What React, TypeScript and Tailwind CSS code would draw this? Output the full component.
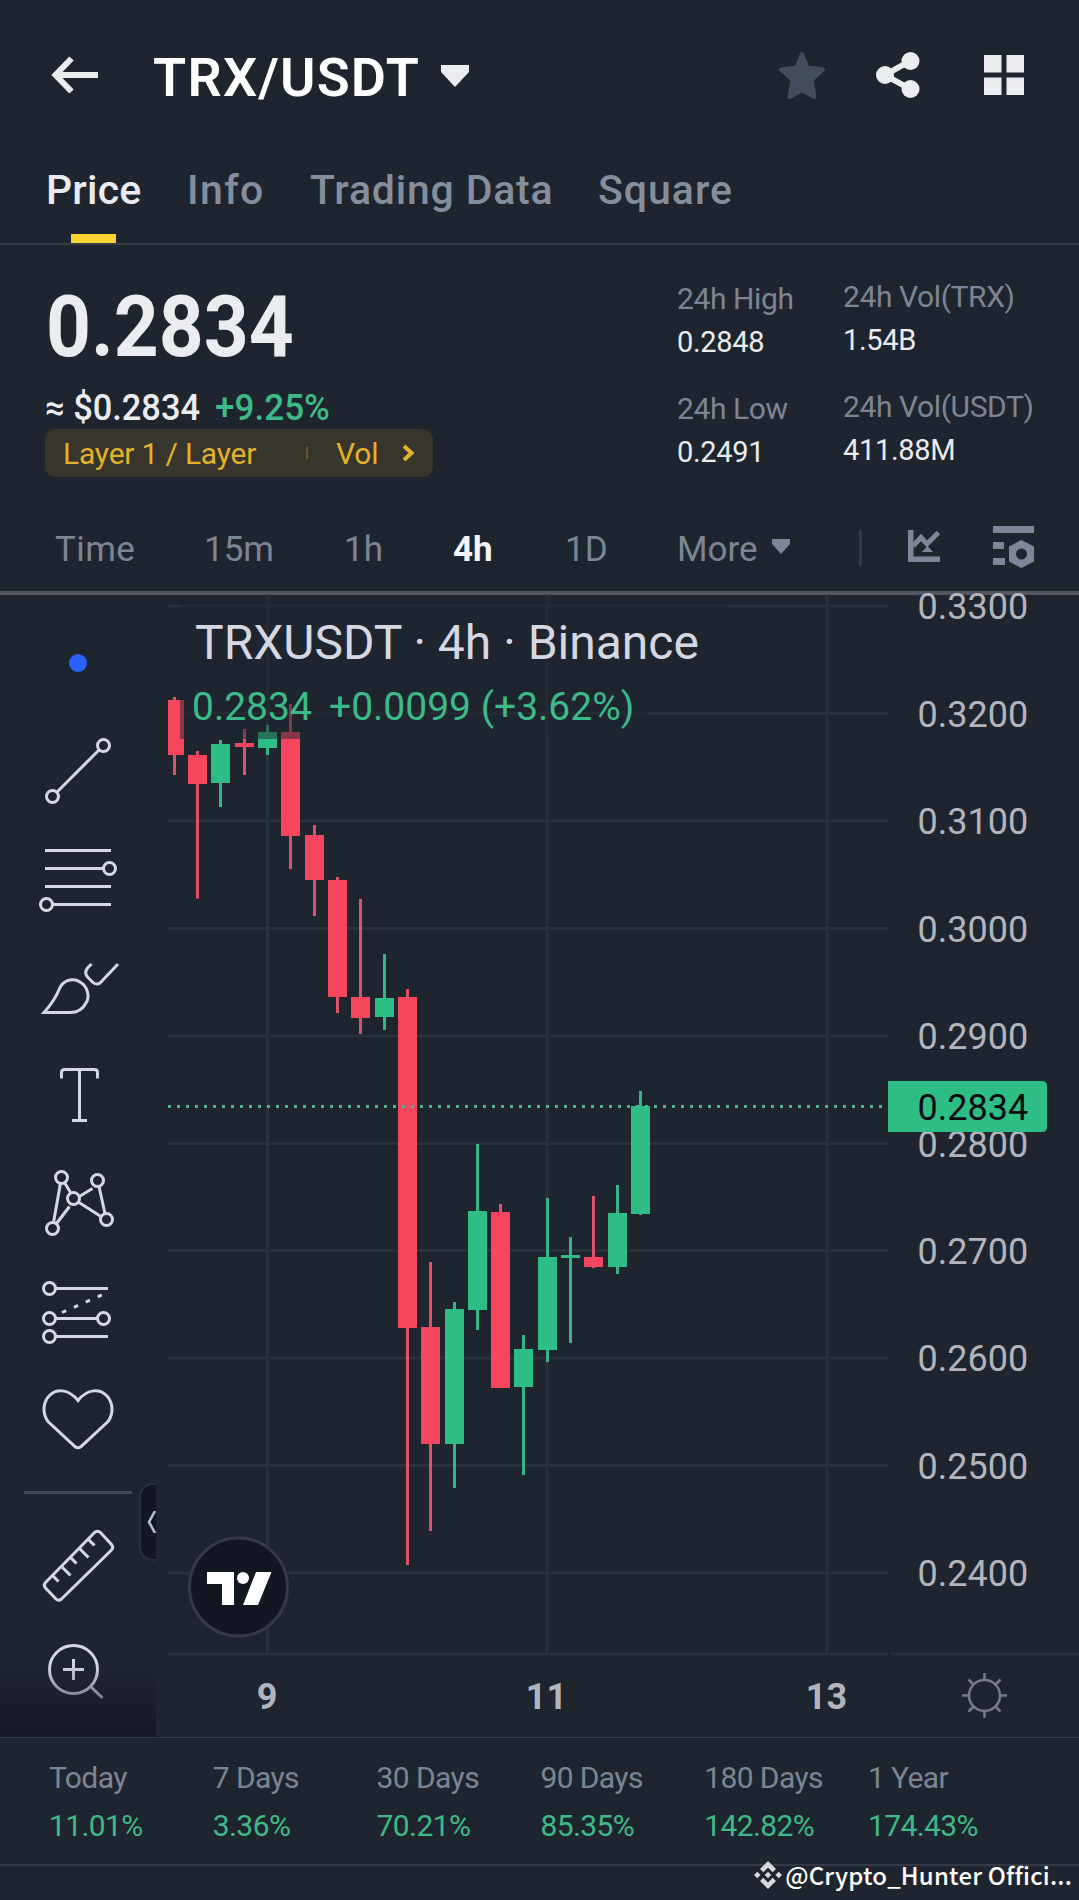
import { clsx } from "clsx";
import type { ReactNode } from "react";

type Candle = { x: number; top: number; bottom: number; high: number; low: number; up?: boolean };

const tabs = [
  { label: "Price", className: "w-[141px] tracking-[0.2px]", active: true },
  { label: "Info", className: "w-[123px] tracking-[1.4px]" },
  { label: "Trading Data", className: "w-[288px] tracking-[0.8px]" },
  { label: "Square", className: "tracking-[1px]" },
];

const intervals = [
  { label: "Time", className: "w-[149px] tracking-[0.4px]" },
  { label: "15m", className: "w-[140px]" },
  { label: "1h", className: "w-[109px]" },
  { label: "4h", className: "w-[112px]", active: true },
  { label: "1D", className: "w-[112px]" },
];

const performance = [
  { label: "Today", value: "11.01%" },
  { label: "7 Days", value: "3.36%" },
  { label: "30 Days", value: "70.21%" },
  { label: "90 Days", value: "85.35%" },
  { label: "180 Days", value: "142.82%" },
  { label: "1 Year", value: "174.43%" },
];

const priceLevels = [
  { label: "0.3300", y: 606 },
  { label: "0.3200", y: 713.5 },
  { label: "0.3100", y: 821 },
  { label: "0.3000", y: 928.5 },
  { label: "0.2900", y: 1036 },
  { label: "0.2800", y: 1143.5 },
  { label: "0.2700", y: 1250.5 },
  { label: "0.2600", y: 1358 },
  { label: "0.2500", y: 1465.5 },
  { label: "0.2400", y: 1573 },
];

const dates = [
  { label: "9", x: 267.5 },
  { label: "11", x: 547 },
  { label: "13", x: 827 },
];

const candles: Candle[] = [
  { x: 165, top: 700, bottom: 755, high: 697, low: 775 },
  { x: 188, top: 755, bottom: 784, high: 751, low: 898.5 },
  { x: 211, top: 744, bottom: 783, high: 740, low: 807, up: true },
  { x: 235, top: 743, bottom: 747, high: 729, low: 775 },
  { x: 258, top: 732, bottom: 748, high: 725, low: 755, up: true },
  { x: 281, top: 732, bottom: 836, high: 704, low: 869 },
  { x: 305, top: 835, bottom: 880, high: 825, low: 916 },
  { x: 328, top: 880, bottom: 997, high: 877, low: 1013 },
  { x: 351, top: 997, bottom: 1018, high: 899, low: 1034 },
  { x: 375, top: 998, bottom: 1017, high: 954, low: 1030, up: true },
  { x: 398, top: 997, bottom: 1328, high: 989, low: 1565 },
  { x: 421, top: 1327, bottom: 1444, high: 1262, low: 1531 },
  { x: 445, top: 1309, bottom: 1444, high: 1302, low: 1488, up: true },
  { x: 468, top: 1211, bottom: 1310, high: 1144, low: 1330, up: true },
  { x: 491, top: 1212, bottom: 1388, high: 1204, low: 1388 },
  { x: 514, top: 1349, bottom: 1387, high: 1335, low: 1475, up: true },
  { x: 538, top: 1257, bottom: 1350, high: 1198, low: 1362, up: true },
  { x: 561, top: 1255, bottom: 1258, high: 1237, low: 1343, up: true },
  { x: 584, top: 1257, bottom: 1267, high: 1196, low: 1268 },
  { x: 608, top: 1213, bottom: 1267, high: 1185, low: 1274, up: true },
  { x: 631, top: 1106, bottom: 1214, high: 1091, low: 1215, up: true },
];

function Header() {
  return (
    <header className="flex h-[152px] items-center">
      <svg className="ml-[51px] -mt-0.5 h-12 w-[50px]" viewBox="0 0 50 48" fill="none" stroke="#eaecf0" strokeWidth="6">
        <path d="M20.500 7.500 4.500 24l16 16.500M4.500 24H47" />
      </svg>
      <h1 className="mt-1 ml-[52px] w-[288px] whitespace-nowrap text-[54px] leading-none font-semibold tracking-[1.2px] text-white">
        TRX/USDT
      </h1>
      <svg className="h-[22px] w-7" viewBox="0 0 28 22" fill="#eaecf0">
        <path d="M0 0h28v7L14 22 0 7z" />
      </svg>
      <svg className="-mt-0.5 ml-[308px] h-[50px] w-[50px]" viewBox="0 0 50 50" fill="#444d5d" stroke="#444d5d" strokeWidth="4" strokeLinejoin="round">
        <path d="m25 4 5.500 13.500L46 19.500 34.500 30l3 17L25 40.500 12.500 47l3-17L4 19.500l15.500-2z" />
      </svg>
      <svg className="-mt-0.5 ml-[49px] h-12 w-11" viewBox="0 0 44 48" fill="#eaecf0">
        <path d="M34 10 9 24l25 14" fill="none" stroke="#eaecf0" strokeWidth="6" />
        <circle cx="9" cy="24" r="9" />
        <circle cx="34.500" cy="10" r="9" />
        <circle cx="34.500" cy="38" r="9" />
      </svg>
      <svg className="-mt-0.5 ml-16 h-10 w-10" viewBox="0 0 40 40" fill="#eaecf0">
        <path d="M0 0h17.500v17.500H0zM22.500 0H40v17.500H22.500zM0 22.500h17.500V40H0zM22.500 22.500H40V40H22.500z" />
      </svg>
    </header>
  );
}

function Tabs() {
  return (
    <nav className="flex h-[93px] border-b-2 border-[#353b46] pl-[46px] text-[41px] font-medium">
      {tabs.map((tab) => (
        <div
          key={tab.label}
          className={clsx("whitespace-nowrap leading-[76px]", tab.className, tab.active ? "text-[#eaecf0]" : "text-[#858e9c]")}
        >
          {tab.label}
          {tab.active && <div className="mt-1.5 ml-[25px] h-[9px] w-[45px] bg-[#fcd535]" />}
        </div>
      ))}
    </nav>
  );
}

function Stat({ label, value }: { label: string; value: string }) {
  return (
    <div className="h-[110px] whitespace-nowrap text-[30px] leading-[30px] tracking-[-0.4px]">
      <div className="text-[#7d8594]">{label}</div>
      <div className="mt-[13px] text-[29px] tracking-[-0.3px] text-[#eaecf0]">{value}</div>
    </div>
  );
}

function Summary() {
  return (
    <section className="flex h-[260px] whitespace-nowrap">
      <div className="w-[677px] shrink-0 pt-[41px] pl-[45px]">
        <div className="ml-px origin-left scale-x-[0.912] text-[86px] leading-[81px] font-bold text-[#eaecf0]">0.2834</div>
        <div className="mt-[21px] flex h-[38px] text-[36px] leading-10 font-medium">
          <span className="w-[170px] origin-left scale-x-[0.955] text-[#eaecf0]">≈ $0.2834</span>
          <span className="origin-left scale-x-[0.975] text-[#3dba88]">+9.25%</span>
        </div>
        <div className="mt-[3px] flex h-12 w-[388px] items-center rounded-[10px] bg-[#37352c] pl-[18px] text-[30px] text-[#e3b22b]">
          <span className="w-[243px] tracking-[-0.2px]">Layer 1 / Layer</span>
          <span className="h-3 w-0.5 bg-[#6b5824]" />
          <span className="ml-[28px] w-[66px] tracking-[-0.2px]">Vol</span>
          <svg className="h-[18px] w-[13px]" viewBox="0 0 13 18" fill="none" stroke="#e3b22b" strokeWidth="4">
            <path d="m2 2 7.500 7L2 16" />
          </svg>
        </div>
      </div>
      <div className="w-[166px] shrink-0 pt-[39px]">
        <Stat label="24h High" value="0.2848" />
        <Stat label="24h Low" value="0.2491" />
      </div>
      <div className="pt-[37px]">
        <Stat label="24h Vol(TRX)" value="1.54B" />
        <Stat label="24h Vol(USDT)" value="411.88M" />
      </div>
    </section>
  );
}

function IntervalBar() {
  return (
    <div className="flex h-[90px] items-center border-b-4 border-[#53565f] pl-[55px] text-[35px] text-[#7d8594]">
      {intervals.map((item) => (
        <div key={item.label} className={clsx("mt-[5px]", item.className, item.active && "font-bold text-[#f3f4f7]")}>
          {item.label}
        </div>
      ))}
      <div className="mt-[5px] w-[95px]">More</div>
      <svg className="-mt-1 h-[15px] w-[18px]" viewBox="0 0 18 15" fill="#7d8799">
        <path d="M0 0h18v5L9 15 0 5z" />
      </svg>
      <div className="ml-[69px] h-9 w-[3px] bg-[#343a46]" />
      <svg className="-mt-1 ml-[46px] h-8 w-8" viewBox="0 0 32 32" fill="none" stroke="#7d8799" strokeWidth="5">
        <path d="M2.500 0v29.500H32" strokeWidth="6" />
        <path d="m5 16 8-8.500 6 6.500L30.500 2.500" />
        <path d="m19.500 16 5.500 6H14z" fill="#7d8799" stroke="none" />
      </svg>
      <svg className="-mt-0.5 ml-[53px] h-[42px] w-[42px]" viewBox="0 0 42 42" fill="#7d8799">
        <path d="M0 0h41v7H0zM0 16h11v7H0zM0 32h12v7H0z" />
        <path fillRule="evenodd" d="M28.500 14 41 20.500v15L28.500 42 16 35.500v-15zM28.500 22.500a5.500 5.500 0 1 0 0 11 5.500 5.500 0 0 0 0-11z" />
      </svg>
    </div>
  );
}

function Tool({ children }: { children: ReactNode }) {
  return (
    <svg className="block h-[108px] w-[156px]" viewBox="0 0 156 108" fill="none" stroke="#d5d8e2" strokeWidth="3">
      {children}
    </svg>
  );
}

function DrawingToolbar() {
  return (
    <aside className="relative w-[156px] shrink-0 pt-3.5">
      <Tool>
        <circle cx="78" cy="54" r="9" fill="#2962ff" stroke="none" />
      </Tool>
      <Tool>
        <circle cx="103.500" cy="28.500" r="6" />
        <circle cx="52.500" cy="79.500" r="6" />
        <path d="M99 33 57 75" />
      </Tool>
      <Tool>
        <path d="M45 25.500h66M45 43.500h58M45 61.500h66M53 79.500h58" />
        <circle cx="109.500" cy="43.500" r="6" />
        <circle cx="46.500" cy="79.500" r="6" />
      </Tool>
      <Tool>
        <path d="M44 79.500C54 68.500 57 62 60 54.500 65 45.500 75 45.500 80 49c8 4.500 10 15 6 21-3 6-8.500 9.500-16 9.500z" />
        <path d="m91.500 31-4 4c-3 4-1.500 7.500.5 9.500l4.500 4.500c3 3 6.500 2.500 9-.5L118 31" />
      </Tool>
      <Tool>
        <path d="M61.500 37.500v-6q0-3 3-3h30q3 0 3 3v6M79.500 28.500v51M72 79.500h15" />
      </Tool>
      <Tool>
        <path d="m60.500 34-7 39.500M64.500 33.500l6 10M56.500 74.500l13-17M78.500 48l14-8.500M99 37.500l6 27M79 53.500l22 14" />
        <circle cx="61.500" cy="28.500" r="6" />
        <circle cx="97.500" cy="31.500" r="6" />
        <circle cx="73.500" cy="49.500" r="6" />
        <circle cx="106.500" cy="70.500" r="6" />
        <circle cx="52.500" cy="79.500" r="6" />
      </Tool>
      <Tool>
        <path d="M56 31.500h52M56 61.500h41M56 79.500h52" />
        <path d="m62 55.500 42-18.500" strokeDasharray="4.500 8.500" />
        <circle cx="49.500" cy="31.500" r="6" />
        <circle cx="49.500" cy="61.500" r="6" />
        <circle cx="103.500" cy="61.500" r="6" />
        <circle cx="49.500" cy="79.500" r="6" />
      </Tool>
      <Tool>
        <path d="M78 35.500C68 23 56 24 49.500 30.500c-6 6-8 17-1.500 26L75 81.500q3 2.500 6 0l27-25c6.500-9 4.500-20-1.500-26C100 24 88 23 78 35.500z" />
      </Tool>
      <div className="mt-[18px] mb-[18px] ml-6 h-[3px] w-[108px] bg-[#454954]" />
      <Tool>
        <path d="m45.500 70.500 49-50q3-2.500 6 0l11 12q2.500 3 0 5.500l-50 49q-3 2.500-5.500 0l-10.500-11q-2.500-3 0-5.500z" />
        <path d="m52.500 63.500 6 6M61.500 54.500l9 9M70.500 45.500l6 6M79.500 36.500l9 9M88.500 27.500l6 6" />
      </Tool>
      <Tool>
        <circle cx="73.500" cy="49.500" r="24" />
        <path d="M73.500 39v21M63 49.500h21M91 67l11.500 11" />
      </Tool>
      <div className="absolute bottom-0 left-0 h-[72px] w-full bg-linear-to-b from-[#161925]/0 to-[#161925]" />
      <div className="absolute top-[888px] right-0 flex h-[78px] w-[17px] items-center rounded-l-[14px] border-2 border-r-0 border-[#2b303b] bg-[#131722] pl-1.5">
        <svg className="h-[22px] w-[9px]" viewBox="0 0 9 22" fill="none" stroke="#b8c2cc" strokeWidth="2.500">
          <path d="M8 0 2 11l6 11" />
        </svg>
      </div>
    </aside>
  );
}

function Chart() {
  return (
    <div className="relative w-[923px]">
      <svg className="block h-[1142px] w-[923px] overflow-visible" viewBox="156 595 923 1142">
        <g stroke="#2b313b" strokeWidth="3">
          {priceLevels.map((level) => (
            <path key={level.label} d={`M168 ${level.y}H888`} />
          ))}
          {dates.map((date) => (
            <path key={date.label} d={`M${date.x} 595V1654`} />
          ))}
          <path d="M168 1654H888M891 1654H1079" />
        </g>
        <clipPath id="pane">
          <rect x="168" y="595" width="720" height="1059" />
        </clipPath>
        <g clipPath="url(#pane)">
          {candles.map((c) => (
            <g key={c.x}>
              <rect x={c.x + 8} y={c.high} width="3" height={c.low - c.high} fill={c.up ? "#36b586" : "#dd5468"} />
              <rect x={c.x} y={c.top} width="19" height={c.bottom - c.top} fill={c.up ? "#2ebd85" : "#f6465d"} />
            </g>
          ))}
        </g>
        <path d="M168 1106.500H888" stroke="#4cb491" strokeWidth="3" strokeDasharray="3 6" />
        <g fill="#b2b5be" fontSize="36">
          {priceLevels.map((level) => (
            <text key={level.label} x="917.500" y={level.y + 13}>
              {level.label}
            </text>
          ))}
        </g>
        <path d="M888 1081h154q5 0 5 5v41q0 5-5 5H888z" fill="#2ebd85" />
        <text x="917.500" y="1119.500" fontSize="36" fill="#0b0e11">
          0.2834
        </text>
        <g fill="#b2b5be" fontSize="36" fontWeight="700" textAnchor="middle">
          {dates.map((date) => (
            <text key={date.label} x={date.x - 0.5} y="1709">
              {date.label}
            </text>
          ))}
        </g>
        <g stroke="#787b86" strokeWidth="2.500" fill="none">
          <circle cx="984.500" cy="1695.500" r="15.500" />
          <path d="M984.500 1673v7M984.500 1711v7M962 1695.500h7M1000 1695.500h7M968.500 1679.500l5 5M995.500 1706.500l5 5M1000.500 1679.500l-5 5M973.500 1706.500l-5 5" />
        </g>
        <circle cx="238.500" cy="1587" r="49" fill="#131722" stroke="#363a45" strokeWidth="3" />
        <g fill="#fff">
          <path d="M207 1572h27v33h-12v-21h-15zM256 1572h15.500l-13.500 33h-15z" />
          <circle cx="243" cy="1578" r="6" />
        </g>
      </svg>
      <div className="absolute top-0 left-6 whitespace-nowrap">
        <div className="h-[84px] w-[548px] bg-[#1f252f]/50 pt-4 pl-[15px] text-[48px] leading-[64px] text-[#d5d8e2]">
          TRXUSDT · 4h · Binance
        </div>
        <div className="flex h-[60px] w-[470px] bg-[#1f252f]/50 pl-3 text-[39px] leading-[56px] text-[#3bbb89]">
          <span className="w-[137px]">0.2834</span>
          <span>+0.0099 (+3.62%)</span>
        </div>
      </div>
    </div>
  );
}

function Performance() {
  return (
    <footer className="flex h-[129px] border-t border-b-2 border-t-[#363c47] border-b-[#343a45] pt-[25px] pl-[49px] whitespace-nowrap">
      {performance.map((item) => (
        <div key={item.label} className="w-[163.800px] shrink-0 text-[30px] leading-[30px] tracking-[-0.6px]">
          <div className="text-[#7d8594]">{item.label}</div>
          <div className="mt-[18px] text-[#3dba88]">{item.value}</div>
        </div>
      ))}
    </footer>
  );
}

function Signature() {
  return (
    <div className="absolute right-[7px] bottom-[9px] flex items-center gap-[3px] font-['Noto_Sans_CJK_SC',sans-serif] text-[24px] leading-8 font-medium tracking-[0.2px] whitespace-nowrap text-white">
      <svg className="h-[28px] w-[28px]" viewBox="0 0 28 28" fill="#d8d9db">
        <path d="m14 0 8 8-3.300 3.300L14 6.600l-4.700 4.700L6 8zM14 28l8-8-3.300-3.300-4.700 4.700-4.700-4.700L6 20zM14 10.700l3.300 3.300-3.300 3.300-3.300-3.300zM3.300 10.700 6.600 14l-3.300 3.300L0 14zM24.700 10.700 28 14l-3.300 3.300-3.300-3.300z" />
      </svg>
      <span>@Crypto_Hunter Offici...</span>
    </div>
  );
}

export default function App() {
  return (
    <main className="relative h-[1900px] w-[1079px] overflow-hidden bg-[#1f252f] font-[Roboto,sans-serif]">
      <Header />
      <Tabs />
      <Summary />
      <IntervalBar />
      <div className="flex">
        <DrawingToolbar />
        <Chart />
      </div>
      <Performance />
      <Signature />
    </main>
  );
}
